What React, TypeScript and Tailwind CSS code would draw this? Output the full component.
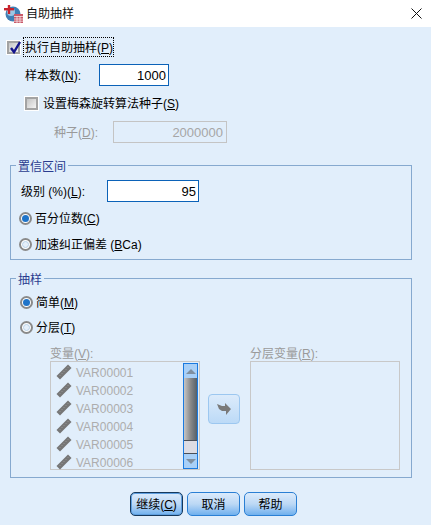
import React from 'react';

const FONT = "font-['Liberation_Sans','Noto_Sans_CJK_SC',sans-serif]";

const U: React.FC<{ children: React.ReactNode }> = ({ children }) => (
  <span className="underline underline-offset-1">{children}</span>
);

const AppIcon = () => (
  <svg width="20" height="20" viewBox="0 0 20 20">
    <circle cx="9" cy="10" r="7.5" fill="#3f7fb5" />
    <circle cx="7" cy="8" r="4" fill="#9cc6e4" />
    <rect x="0" y="4" width="10" height="2.4" fill="#c8232c" />
    <rect x="3.8" y="1" width="2.4" height="9" fill="#c8232c" />
    <rect x="10" y="10" width="9" height="9" fill="#c9596a" />
    <path d="M10 12.5h9M10 15h9M10 17.2h9M13 12v7M16 12v7" stroke="#f3e4e6" strokeWidth="0.8" />
  </svg>
);

const Check: React.FC<{ checked?: boolean }> = ({ checked }) => (
  <span className="relative block w-[13px] h-[13px] shrink-0 border-2 border-[#a3a3a3] bg-gradient-to-br from-[#c4c4c4] to-[#f4f4f4] outline outline-1 outline-white">
    {checked && (
      <svg className="absolute -left-[1px] -top-[3px]" width="15" height="15" viewBox="0 0 15 15">
        <path d="M3 8l3 4 6-10" fill="none" stroke="#14148c" strokeWidth="2.4" />
      </svg>
    )}
  </span>
);

const Radio: React.FC<{ checked?: boolean }> = ({ checked }) => (
  <span className="flex items-center justify-center w-[13px] h-[13px] shrink-0 rounded-full bg-white border-2 border-[#8a8a8a]">
    <span className={checked ? 'block w-[7px] h-[7px] rounded-full bg-[#1f74c9]' : 'block w-[7px] h-[7px] rounded-full bg-[#e6f0fa] border border-[#b9d3ea]'} />
  </span>
);

const Num: React.FC<{ value: string; width: string }> = ({ value, width }) => (
  <div className={`${width} h-[22px] border border-[#0b62b8] bg-white flex items-center justify-end pr-[2px] pt-[1px] text-[13px]`}>{value}</div>
);

const Group: React.FC<{ title: string; className: string; children: React.ReactNode }> = ({ title, className, children }) => (
  <div className={`relative mx-[10px] w-[402px] border border-[#86a9cf] ${className}`}>
    <span className="absolute left-[5px] -top-[7px] h-[16px] px-[2px] bg-[#e1eefb] text-[#2a3c8f] leading-[16px]">{title}</span>
    {children}
  </div>
);

const Ruler = () => (
  <svg width="16" height="16" viewBox="0 0 16 16" className="shrink-0">
    <path d="M0.5 12L12 0.5 15.5 4 4 15.5z" fill="#767676" />
    <path d="M3.5 11l1 1M5.5 9l1 1M7.5 7l1 1M9.5 5l1 1M11.5 3l1 1" stroke="#9c9c9c" strokeWidth="0.8" />
  </svg>
);

const VARS = ['VAR00001', 'VAR00002', 'VAR00003', 'VAR00004', 'VAR00005', 'VAR00006'];

const Btn: React.FC<{ focus?: boolean; children: React.ReactNode }> = ({ focus, children }) => (
  <button className={`w-[53px] h-[24px] pt-[1px] rounded-[5px] border bg-gradient-to-b from-[#dcebfb] via-[#bcd8f5] to-[#6fb0ee] flex items-center justify-center text-[12px] ${focus ? 'border-[#16395c] shadow-[inset_0_0_0_1px_#5f9fdf]' : 'border-[#2a7fd4]'}`}>
    {children}
  </button>
);

export default function App() {
  return (
    <div className={`w-[431px] h-[525px] overflow-hidden bg-white text-black text-[12px] ${FONT}`}>
      {/* Title bar */}
      <div className="h-[27px] flex items-center pl-[4px] pr-[9px]">
        <AppIcon />
        <span className="ml-[2px] text-[#111]">自助抽样</span>
        <svg className="ml-auto" width="11" height="11" viewBox="0 0 11 11">
          <path d="M0.5 0.5l10 10M10.5 0.5l-10 10" stroke="#111" strokeWidth="1" />
        </svg>
      </div>

      <div className="h-[498px] bg-[#e1eefb] pt-[10px]">
        {/* Bootstrap options */}
        <div className="h-[20px] flex items-center pl-[7px]">
          <Check checked />
          <span className="ml-[3px] h-[20px] pl-[1px] pt-[1px] flex items-center border border-dotted border-black">
            执行自助抽样(<U>P</U>)
          </span>
        </div>
        <div className="mt-[7px] h-[22px] flex items-center pl-[25px]">
          <span className="w-[74px] pt-[1px]">样本数(<U>N</U>):</span>
          <Num value="1000" width="w-[70px]" />
        </div>
        <div className="mt-[11px] h-[13px] flex items-center pl-[25px]">
          <Check />
          <span className="ml-[5px] pt-[1px]">设置梅森旋转算法种子(<U>S</U>)</span>
        </div>
        <div className="mt-[11px] h-[22px] flex items-center pl-[54px] text-[#9a9a9a]">
          <span className="w-[59px] pt-[2px]">种子(<U>D</U>):</span>
          <div className="w-[114px] h-[22px] border border-[#c4c4c4] flex items-center justify-end pr-[3px] pt-[1px] text-[13px] text-[#a6a6a6]">2000000</div>
        </div>

        {/* Confidence interval */}
        <Group title="置信区间" className="mt-[22px] h-[95px] pt-[14px]">
          <div className="h-[22px] flex items-center pl-[10px]">
            <span className="w-[86px] pt-[1px]">级别 (%)(<U>L</U>):</span>
            <Num value="95" width="w-[92px]" />
          </div>
          <div className="mt-[6px] h-[20px] flex items-center gap-[3px] pl-[8px]">
            <Radio checked />
            <span className="pt-[2px]">百分位数(<U>C</U>)</span>
          </div>
          <div className="mt-[6px] h-[20px] flex items-center gap-[3px] pl-[8px]">
            <Radio />
            <span className="pt-[2px]">加速纠正偏差 (<U>B</U>Ca)</span>
          </div>
        </Group>

        {/* Sampling */}
        <Group title="抽样" className="mt-[18px] h-[200px] pt-[13px]">
          <div className="h-[20px] flex items-center gap-[3px] pl-[9px]">
            <Radio checked />
            <span className="pt-[1px]">简单(<U>M</U>)</span>
          </div>
          <div className="mt-[5px] h-[20px] flex items-center gap-[3px] pl-[9px]">
            <Radio />
            <span className="pt-[1px]">分层(<U>T</U>)</span>
          </div>
          <div className="mt-[9px] pl-[39px] flex">
            <div className="w-[150px]">
              <div className="h-[15px] leading-[17px] text-[#9a9a9a]">变量(<U>V</U>):</div>
              <div className="h-[109px] border border-[#c8c8c8] flex pl-[5px] pr-[1px] pt-[1px]">
                <div className="flex-1">
                  {VARS.map(v => (
                    <div key={v} className="h-[18px] flex items-center gap-[4px] text-[#adadad]">
                      <Ruler />
                      <span className="pt-[2px]">{v}</span>
                    </div>
                  ))}
                </div>
                <div className="w-[15px] h-[106px] border border-[#1a7ae0] bg-gradient-to-r from-[#c6c6c6] via-[#8a8a8a] to-[#55606a] flex flex-col">
                  <div className="h-[14px] bg-[#a9d0f7] flex items-center justify-center">
                    <span className="w-0 h-0 border-x-[5px] border-x-transparent border-b-[5px] border-b-[#7f8fa0]" />
                  </div>
                  <div className="flex-1" />
                  <div className="h-[14px] bg-[#dcdce4] border-y border-[#4a4f58]" />
                  <div className="h-[14px] bg-[#a9d0f7] flex items-center justify-center">
                    <span className="w-0 h-0 border-x-[5px] border-x-transparent border-t-[5px] border-t-[#7f8fa0]" />
                  </div>
                </div>
              </div>
            </div>
            <div className="w-[50px] flex pl-[8px] pt-[48px]">
              <div className="w-[32px] h-[30px] rounded-[4px] border border-[#9cc7f0] bg-gradient-to-b from-[#dcebfb] to-[#bcdaf7] flex items-center justify-center">
                <svg width="16" height="14" viewBox="0 0 16 14">
                  <path d="M1 2l5 2h3V1l6 6-5 6V9H6L3 7z" fill="#7a7a7a" />
                </svg>
              </div>
            </div>
            <div className="w-[150px]">
              <div className="h-[15px] leading-[17px] text-[#9a9a9a]">分层变量(<U>R</U>):</div>
              <div className="h-[109px] border border-[#c8c8c8]" />
            </div>
          </div>
        </Group>

        {/* Actions */}
        <div className="mt-[14px] pl-[130px] flex gap-[4px]">
          <Btn focus>继续(<U>C</U>)</Btn>
          <Btn>取消</Btn>
          <Btn>帮助</Btn>
        </div>
      </div>
    </div>
  );
}
